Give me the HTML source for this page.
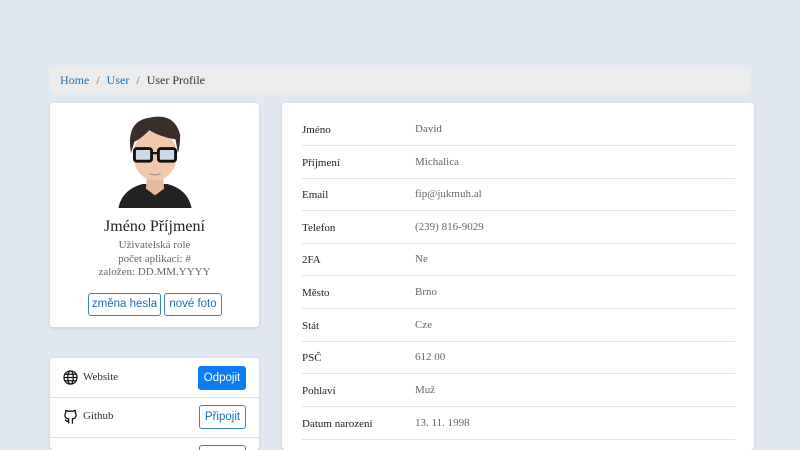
<!DOCTYPE html>
<html><head><meta charset="utf-8"><style>
*{box-sizing:border-box;margin:0;padding:0}
html,body{width:800px;height:450px;overflow:hidden}
body{background:#e2e8f0;font-family:"Liberation Serif",serif;position:relative}
.bc{position:absolute;left:50px;top:68px;width:700px;height:25px;background:#ececec;font-size:12px;line-height:25px;padding-left:10px;color:#333}
.bc a{color:#1a73b8;text-decoration:none}
.bc span{color:#666;margin:0 7px}
.card{position:absolute;background:#fff;border-radius:3px;box-shadow:0 1px 3px rgba(0,0,0,.12);overflow:hidden}
.c1{left:50px;top:103px;width:209px;height:224px;text-align:center}
.name{position:absolute;top:115px;left:0;width:100%;font-size:16px;color:#222}
.meta{position:absolute;top:136px;left:0;width:100%;font-size:11px;color:#666;line-height:13.5px}
.btn{position:absolute;height:23px;border:1px solid #3b82c4;border-radius:3px;color:#1a6fb8;font-family:"Liberation Sans",sans-serif;font-size:11.5px;line-height:21px;text-align:center;background:#fff}
.c2{left:282px;top:103px;width:472px;height:347px}
.row{position:absolute;left:20px;width:433px;border-bottom:1px solid #e3e3e3;height:33px;font-size:11px}
.row .l{position:absolute;left:0;top:11px;color:#222}
.row .v{position:absolute;left:113px;top:10px;color:#666}
.c3{left:50px;top:358px;width:209px;height:92px}
.sr{position:absolute;left:0;width:209px;height:40px;border-bottom:1px solid #ddd;font-size:11px;color:#333}
</style></head><body>
<div class="bc"><a>Home</a><span>/</span><a>User</a><span>/</span>User Profile</div>
<div class="card c1">
<svg style="position:absolute;left:65px;top:9px" width="80" height="96" viewBox="0 0 70 84">
<path d="M3 84 Q6 68 24 63 L46 63 Q64 68 67 84Z" fill="#222"/>
<path d="M28 55 L42 55 L43 67 L35 73 L27 67Z" fill="#e6b99c"/>
<ellipse cx="35" cy="38" rx="19" ry="22" fill="#f2c8ac"/>
<path d="M14 36 Q9 8 30 5 Q52 0 57 20 Q57 30 55 36 L53 24 Q40 22 30 16 Q22 24 17 26 Z" fill="#3a2e2a"/>
<rect x="17" y="32" width="15" height="11" rx="2" fill="#cfd8e6" stroke="#111" stroke-width="2.5"/>
<rect x="38" y="32" width="15" height="11" rx="2" fill="#cfd8e6" stroke="#111" stroke-width="2.5"/>
<path d="M32 36 H38" stroke="#111" stroke-width="2"/>
<path d="M30 54 Q35 56 40 54" stroke="#b58a75" fill="none"/>
</svg>
<div class="name">Jméno Příjmení</div>
<div class="meta">Uživatelská role<br>počet aplikací: #<br>založen: DD.MM.YYYY</div>
<div class="btn" style="left:38px;top:190px;width:73px">změna hesla</div>
<div class="btn" style="left:114px;top:190px;width:58px">nové foto</div>
</div>
<div class="card c2">
<div class="row" style="top:10px"><span class="l">Jméno</span><span class="v">David</span></div>
<div class="row" style="top:43px"><span class="l">Příjmení</span><span class="v">Michalica</span></div>
<div class="row" style="top:75px"><span class="l">Email</span><span class="v">fip@jukmuh.al</span></div>
<div class="row" style="top:108px"><span class="l">Telefon</span><span class="v">(239) 816-9029</span></div>
<div class="row" style="top:140px"><span class="l">2FA</span><span class="v">Ne</span></div>
<div class="row" style="top:173px"><span class="l">Město</span><span class="v">Brno</span></div>
<div class="row" style="top:206px"><span class="l">Stát</span><span class="v">Cze</span></div>
<div class="row" style="top:238px"><span class="l">PSČ</span><span class="v">612 00</span></div>
<div class="row" style="top:271px"><span class="l">Pohlaví</span><span class="v">Muž</span></div>
<div class="row" style="top:304px"><span class="l">Datum narození</span><span class="v">13. 11. 1998</span></div>
</div>
<div class="card c3">
<div class="sr" style="top:0">
<svg style="position:absolute;left:13px;top:12px" width="15" height="15" viewBox="0 0 16 16" fill="none" stroke="#111" stroke-width="1.3"><circle cx="8" cy="8" r="7"/><ellipse cx="8" cy="8" rx="3" ry="7"/><path d="M1 8H15M2 4.5H14M2 11.5H14"/></svg>
<span style="position:absolute;left:33px;top:13px">Website</span>
<div class="btn" style="left:148px;top:8px;width:48px;height:24px;background:#0d7bf2;border-color:#0d7bf2;color:#fff;line-height:22px">Odpojit</div>
</div>
<div class="sr" style="top:40px">
<svg style="position:absolute;left:13px;top:11px" width="15" height="16" viewBox="0 0 16 16" fill="none" stroke="#111" stroke-width="1.4"><path d="M6 15V12.5Q3 13 2.5 10.5M10 15V12Q10.5 11 10 10Q14 9.5 14 6Q14 4.5 13 3.5Q13.4 2 13 1Q11.5 1 10.5 2Q8 1.4 5.5 2Q4.5 1 3 1Q2.6 2 3 3.5Q2 4.5 2 6Q2 9.5 6 10Q5.5 11 6 12"/></svg>
<span style="position:absolute;left:33px;top:12px">Github</span>
<div class="btn" style="left:149px;top:7px;width:47px;height:24px;line-height:22px">Připojit</div>
</div>
<div class="sr" style="top:80px;border:none">
<div class="btn" style="left:149px;top:7px;width:47px;height:24px"></div>
</div>
</div>
</body></html>
